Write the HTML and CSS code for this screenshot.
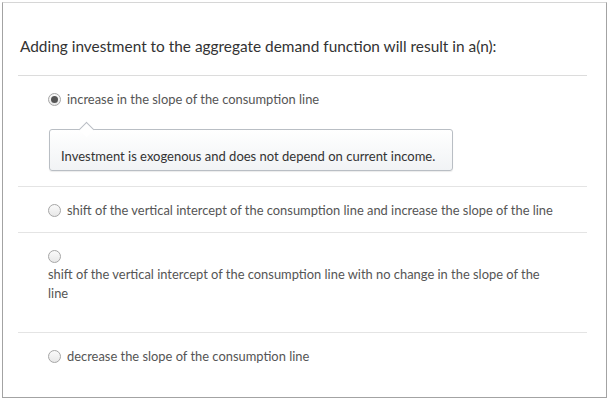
FILE: index.html
```html
<!DOCTYPE html>
<html lang="en">
<head>
    <meta charset="UTF-8">
    <title>Question</title>
    <link rel="stylesheet" href="styles.css">
</head>
<body>
    <div class="question">
        <div class="question-text">Adding investment to the aggregate demand function will result in a(n):</div>

        <div class="option selected">
            <label class="option-label">
                <span class="radio checked"></span><span class="option-text">increase in the slope of the consumption line</span>
            </label>
            <div class="feedback">
                Investment is exogenous and does not depend on current income.
            </div>
        </div>

        <div class="option">
            <label class="option-label">
                <span class="radio"></span><span class="option-text">shift of the vertical intercept of the consumption line and increase the slope of the line</span>
            </label>
        </div>

        <div class="option tall">
            <label class="option-label stacked">
                <span class="radio"></span><span class="option-text">shift of the vertical intercept of the consumption line with no change in the slope of the line</span>
            </label>
        </div>

        <div class="option last">
            <label class="option-label">
                <span class="radio"></span><span class="option-text">decrease the slope of the consumption line</span>
            </label>
        </div>
    </div>
</body>
</html>
```

FILE: styles.css
```css
* {
    margin: 0;
    padding: 0;
    box-sizing: border-box;
}

body {
    font-family: Lato, 'Open Sans', sans-serif;
    background: #fff;
    color: #333;
    width: 608px;
    height: 408px;
    overflow: hidden;
}

.question {
    margin: 2px 0 0 2px;
    width: 605px;
    height: 396px;
    border: 1px solid #a3a3a3;
    border-top-color: #d6d6d6;
    padding: 0 19px 0 15px;
}

.question-text {
    font-size: 15.4px;
    line-height: 20px;
    color: #333;
    padding: 33px 0 0 2px;
    height: 73px;
    border-bottom: 1px solid #dcdcdc;
}

.option {
    border-bottom: 1px solid #e4e4e4;
    padding: 14px 0 12px 30px;
    font-size: 12.9px;
    line-height: 19px;
    color: #555;
}

.option.selected {
    padding-bottom: 15px;
}

.option.last {
    border-bottom: none;
}

.option-label {
    display: block;
    width: 512px;
}

.option-label.stacked .radio {
    display: block;
    margin: 3px 0 2px;
}

.option-label.stacked .option-text {
    display: block;
    padding-bottom: 17px;
}

.radio {
    display: inline-block;
    width: 13px;
    height: 13px;
    border: 1px solid #a6a6a6;
    border-radius: 50%;
    background: linear-gradient(#fafafa, #e8e8e8);
    vertical-align: -2px;
    margin-right: 6px;
    position: relative;
}

.radio.checked::after {
    content: "";
    position: absolute;
    left: 2px;
    top: 2px;
    width: 7px;
    height: 7px;
    border-radius: 50%;
    background: #555;
}

.feedback {
    position: relative;
    margin: 20px 0 0 1px;
    width: 404px;
    height: 42px;
    border: 1px solid #b9bec4;
    border-radius: 3px;
    background: linear-gradient(#fff, #f1f3f5);
    box-shadow: 0 1px 1px rgba(0, 0, 0, 0.08);
    padding: 17px 0 0 11px;
    font-size: 13px;
    line-height: 19px;
    color: #333;
}

.feedback::before {
    content: "";
    position: absolute;
    left: 31px;
    top: -6px;
    width: 10px;
    height: 10px;
    background: #fff;
    border-left: 1px solid #b9bec4;
    border-top: 1px solid #b9bec4;
    transform: rotate(45deg);
}
```
